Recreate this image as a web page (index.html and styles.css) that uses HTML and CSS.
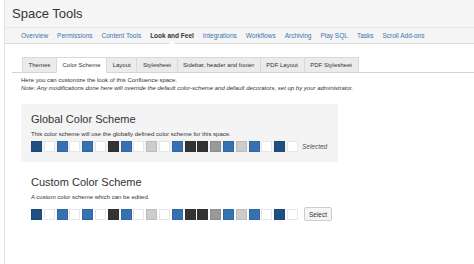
FILE: index.html
```html
<!DOCTYPE html>
<html lang="en">
<head>
    <meta charset="UTF-8">
    <title>Space Tools</title>
    <link rel="stylesheet" href="styles.css">
</head>
<body>
    <div class="page">
        <header class="space-header">
            <h1 class="space-title">Space Tools</h1>
            <nav class="space-nav">
                <a href="#">Overview</a>
                <a href="#">Permissions</a>
                <a href="#">Content Tools</a>
                <a href="#" class="active">Look and Feel</a>
                <a href="#">Integrations</a>
                <a href="#">Workflows</a>
                <a href="#">Archiving</a>
                <a href="#">Play SQL</a>
                <a href="#">Tasks</a>
                <a href="#">Scroll Add-ons</a>
            </nav>
        </header>
        <div class="tools-body">
            <ul class="tabs">
                <li class="tab">Themes</li>
                <li class="tab active">Color Scheme</li>
                <li class="tab">Layout</li>
                <li class="tab">Stylesheet</li>
                <li class="tab">Sidebar, header and footer</li>
                <li class="tab">PDF Layout</li>
                <li class="tab">PDF Stylesheet</li>
            </ul>
            <div class="tab-content">
                <p class="intro">
                    Here you can customize the look of this Confluence space.<br>
                    <em>Note: Any modifications done here will override the default color-scheme and default decorators, set up by your administrator.</em>
                </p>
                <section class="scheme global">
                    <h2>Global Color Scheme</h2>
                    <p class="scheme-desc">This color scheme will use the globally defined color scheme for this space.</p>
                    <div class="swatch-row">
                        <div class="swatches">
                            <span class="sw navy"></span><span class="sw white"></span><span class="sw blue"></span><span class="sw white"></span>
                            <span class="sw blue"></span><span class="sw white"></span><span class="sw dark"></span><span class="sw blue"></span>
                            <span class="sw white"></span><span class="sw light"></span><span class="sw white"></span><span class="sw blue"></span>
                            <span class="sw dark"></span><span class="sw dark"></span><span class="sw gray"></span><span class="sw blue"></span>
                            <span class="sw light"></span><span class="sw blue"></span><span class="sw white"></span><span class="sw navy"></span>
                            <span class="sw white"></span>
                        </div>
                        <span class="selected">Selected</span>
                    </div>
                </section>
                <section class="scheme custom">
                    <h2>Custom Color Scheme</h2>
                    <p class="scheme-desc">A custom color scheme which can be edited.</p>
                    <div class="swatch-row">
                        <div class="swatches">
                            <span class="sw navy"></span><span class="sw white"></span><span class="sw blue"></span><span class="sw white"></span>
                            <span class="sw blue"></span><span class="sw white"></span><span class="sw dark"></span><span class="sw blue"></span>
                            <span class="sw white"></span><span class="sw light"></span><span class="sw white"></span><span class="sw blue"></span>
                            <span class="sw dark"></span><span class="sw dark"></span><span class="sw gray"></span><span class="sw blue"></span>
                            <span class="sw light"></span><span class="sw blue"></span><span class="sw white"></span><span class="sw navy"></span>
                            <span class="sw white"></span>
                        </div>
                        <button class="select-btn">Select</button>
                    </div>
                </section>
            </div>
        </div>
    </div>
</body>
</html>
```

FILE: styles.css
```css
html, body {
    margin: 0;
    padding: 0;
    background: #fff;
    font-family: 'Liberation Sans', Arial, sans-serif;
    color: #333;
}
.page {
    margin-left: 4px;
    border-left: 1px solid #e2e2e2;
    min-height: 264px;
}
.space-header {
    background: #f5f5f5;
}
.space-title {
    margin: 0;
    padding: 6px 0 5px 7px;
    font-size: 13px;
    line-height: 16px;
    font-weight: normal;
    color: #333;
}
.space-nav {
    display: flex;
    gap: 9px;
    height: 15px;
    align-items: center;
    padding-left: 16px;
    border-top: 1px solid #e4e4e4;
    border-bottom: 1px solid #dcdcdc;
    font-size: 6.5px;
}
.space-nav a {
    color: #3b73af;
    text-decoration: none;
    position: relative;
}
.space-nav a.active {
    color: #333;
    font-weight: bold;
}
.space-nav a.active::after {
    content: "";
    position: absolute;
    left: 50%;
    bottom: -5px;
    margin-left: -3px;
    border: 3px solid transparent;
    border-bottom-color: #fff;
    border-top: 0;
}
.tools-body {
    padding-top: 13px;
}
.tabs {
    display: flex;
    margin: 0 0 0 7px;
    padding: 0 0 0 10px;
    list-style: none;
    border-bottom: 1px solid #d4d4d4;
}
.tab {
    height: 14px;
    line-height: 14px;
    padding: 0 5.6px;
    margin-right: -1px;
    margin-bottom: -1px;
    border: 1px solid #d9d9d9;
    border-bottom: 1px solid #d4d4d4;
    background: #ebebeb;
    font-size: 6px;
    color: #333;
}
.tab.active {
    background: #fff;
    border-bottom-color: #fff;
    position: relative;
}
.tab-content {
    padding: 3px 0 0 16px;
}
.intro {
    margin: 0 0 12px;
    font-size: 6px;
    line-height: 8px;
}
.scheme {
    display: inline-block;
    padding: 9px 11px 10px 10px;
    margin-bottom: 5px;
}
.scheme.global {
    background: #f4f4f4;
}
.scheme h2 {
    margin: 0 0 4px;
    font-size: 11px;
    line-height: 13px;
    font-weight: normal;
    color: #333;
}
.scheme-desc {
    margin: 0 0 3px;
    font-size: 6px;
    line-height: 8px;
}
.swatch-row {
    display: flex;
    align-items: center;
}
.custom .swatch-row {
    margin-top: 6px;
}
.swatches {
    display: flex;
    gap: 1.8px;
}
.sw {
    width: 11px;
    height: 11px;
    box-sizing: border-box;
    border: 1px solid rgba(0, 0, 0, 0.08);
}
.sw.navy { background: #205081; }
.sw.blue { background: #3572b0; }
.sw.dark { background: #333; }
.sw.gray { background: #999; }
.sw.light { background: #ccc; }
.sw.white { background: #fff; border-color: #e6e6e6; }
.selected {
    margin-left: 4px;
    font-size: 6.5px;
    font-style: italic;
    color: #555;
}
.select-btn {
    margin-left: 6px;
    height: 14px;
    padding: 0 4px;
    font-family: inherit;
    font-size: 6.5px;
    color: #333;
    background: #f5f5f5;
    border: 1px solid #ccc;
    border-radius: 2px;
}
```
